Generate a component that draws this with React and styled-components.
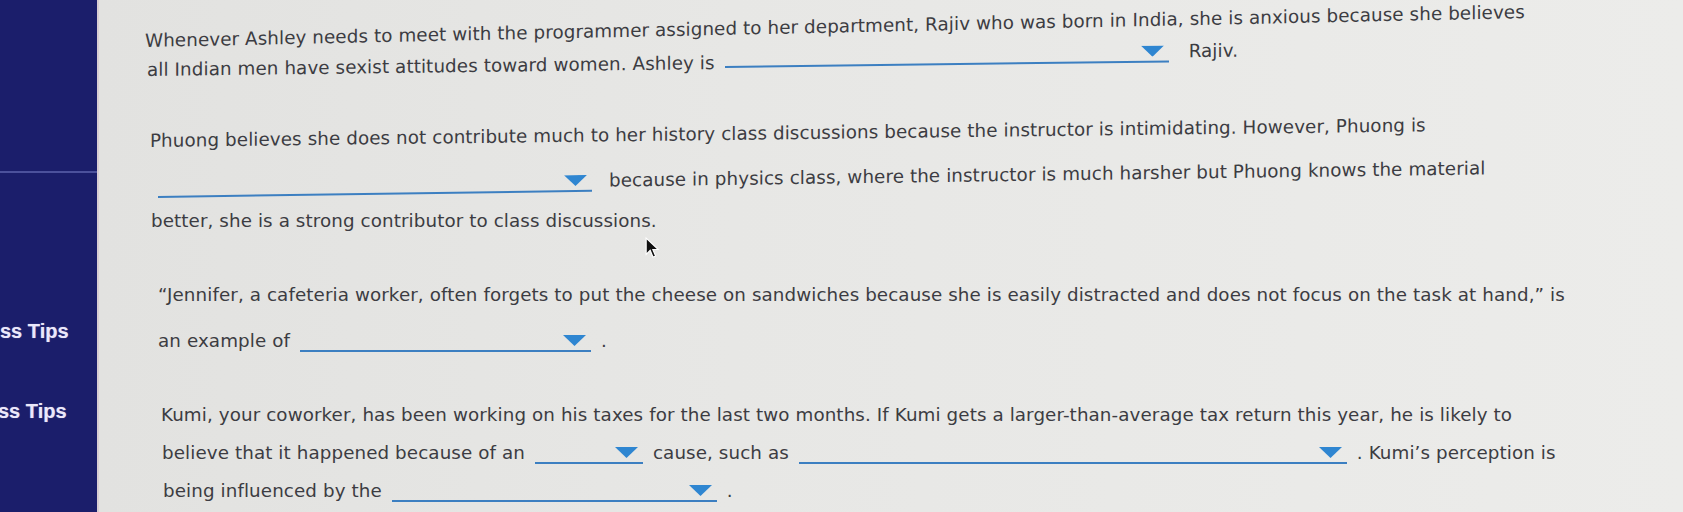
import React from "react";
import styled, { createGlobalStyle } from "styled-components";

const Global = createGlobalStyle`
  html, body { margin: 0; padding: 0; }
  body {
    width: 1683px;
    height: 512px;
    overflow: hidden;
    background: #e7e7e5;
    font-family: "DejaVu Sans", Verdana, sans-serif;
  }
`;

const Page = styled.div`
  display: flex;
  width: 1683px;
  height: 512px;
  overflow: hidden;
`;

const Sidebar = styled.aside`
  width: 97px;
  flex: none;
  display: flex;
  flex-direction: column;
  background: #1b1e6b;
  border-right: 2px solid #d8cdd2;
  overflow: hidden;
`;

const SideDivider = styled.div`
  margin-top: 171px;
  height: 2px;
  background: #4c519c;
`;

const Tip = styled.div`
  margin-top: ${(p) => p.$top}px;
  height: 22px;
  line-height: 22px;
  font-family: "Liberation Sans", Arial, sans-serif;
  font-weight: 700;
  font-size: 20px;
  color: #ebe8fb;
  white-space: nowrap;
  text-indent: ${(p) => p.$indent || 0}px;
  text-shadow: 0 0 1px rgba(255, 255, 255, 0.5);
`;

const Main = styled.main`
  position: relative;
  flex: 1;
  display: flex;
  flex-direction: column;
  padding-top: 29px;
  background: linear-gradient(90deg, #e2e2e0 0%, #e7e7e5 40%, #ececea 100%);
  color: #3c3c42;
  font-size: 18.3px;
  letter-spacing: 0.1px;
  overflow: hidden;
`;

const Question = styled.section`
  display: flex;
  flex-direction: column;
  gap: ${(p) => p.$gap}px;
  margin-top: ${(p) => p.$mt || 0}px;
  padding-left: ${(p) => p.$indent}px;
`;

const Line = styled.div`
  display: flex;
  align-items: center;
  height: 24px;
  gap: 10px;
  white-space: nowrap;
  padding-left: ${(p) => p.$pad || 0}px;
  margin-top: ${(p) => p.$mt || 0}px;
  transform-origin: left center;
  transform: ${(p) => (p.$tilt ? `skewY(${p.$tilt}deg)` : "none")};
`;

const Text = styled.span`
  line-height: 20px;
  margin-bottom: ${(p) => p.$lift || 0}px;
  margin-left: ${(p) => p.$ml || 0}px;
`;

const Select = styled.div`
  flex: none;
  display: flex;
  align-items: center;
  justify-content: flex-end;
  width: ${(p) => p.$w}px;
  height: 22px;
  border-bottom: 2px solid #3c7fc1;
  margin-bottom: ${(p) => p.$lift || 0}px;
  margin-left: ${(p) => p.$ml || 0}px;
  padding-right: 5px;
  box-sizing: border-box;
`;

const Arrow = () => (
  <svg width="23" height="11" viewBox="0 0 23 11">
    <polygon points="0,0 23,0 11.5,11" fill="#2f86d1" />
  </svg>
);

const Dropdown = ({ w, lift, ml }) => (
  <Select $w={w} $lift={lift} $ml={ml}>
    <Arrow />
  </Select>
);

const Cursor = styled.svg`
  position: absolute;
  left: 546px;
  top: 237px;
`;

export default function App() {
  return (
    <>
      <Global />
      <Page>
        <Sidebar>
          <SideDivider />
          <Tip $top={147}>ss Tips</Tip>
          <Tip $top={58} $indent={-2}>ss Tips</Tip>
        </Sidebar>
        <Main>
          <Question $indent={46} $gap={5}>
            <Line $tilt={-1.2}>
              <Text>
                Whenever Ashley needs to meet with the programmer assigned to her department, Rajiv who was born in India, she is anxious because she believes
              </Text>
            </Line>
            <Line $pad={2} $tilt={-0.7}>
              <Text>all Indian men have sexist attitudes toward women. Ashley is</Text>
              <Dropdown w={444} lift={12} />
              <Text $lift={12} $ml={10}>Rajiv.</Text>
            </Line>
          </Question>

          <Question $indent={51} $gap={10} $mt={47}>
            <Line $tilt={-0.7}>
              <Text>
                Phuong believes she does not contribute much to her history class discussions because the instructor is intimidating. However, Phuong is
              </Text>
            </Line>
            <Line $mt={12} $tilt={-0.8}>
              <Dropdown w={434} ml={8} />
              <Text $ml={7}>
                because in physics class, where the instructor is much harsher but Phuong knows the material
              </Text>
            </Line>
            <Line $pad={1}>
              <Text>better, she is a strong contributor to class discussions.</Text>
            </Line>
          </Question>

          <Question $indent={59} $gap={22} $mt={50}>
            <Line>
              <Text>
                “Jennifer, a cafeteria worker, often forgets to put the cheese on sandwiches because she is easily distracted and does not focus on the task at hand,” is
              </Text>
            </Line>
            <Line>
              <Text>an example of</Text>
              <Dropdown w={291} />
              <Text>.</Text>
            </Line>
          </Question>

          <Question $indent={62} $gap={14} $mt={50}>
            <Line>
              <Text>
                Kumi, your coworker, has been working on his taxes for the last two months. If Kumi gets a larger-than-average tax return this year, he is likely to
              </Text>
            </Line>
            <Line $pad={1}>
              <Text>believe that it happened because of an</Text>
              <Dropdown w={108} />
              <Text>cause, such as</Text>
              <Dropdown w={548} />
              <Text>. Kumi’s perception is</Text>
            </Line>
            <Line $pad={2}>
              <Text>being influenced by the</Text>
              <Dropdown w={325} />
              <Text>.</Text>
            </Line>
          </Question>

          <Cursor width="15" height="22" viewBox="0 0 13 19">
            <path d="M1 1 L1 15 L4.5 11.5 L7 17.5 L9.2 16.5 L6.8 10.8 L11.5 10.8 Z" fill="#111" stroke="#fff" strokeWidth="1" />
          </Cursor>
        </Main>
      </Page>
    </>
  );
}
